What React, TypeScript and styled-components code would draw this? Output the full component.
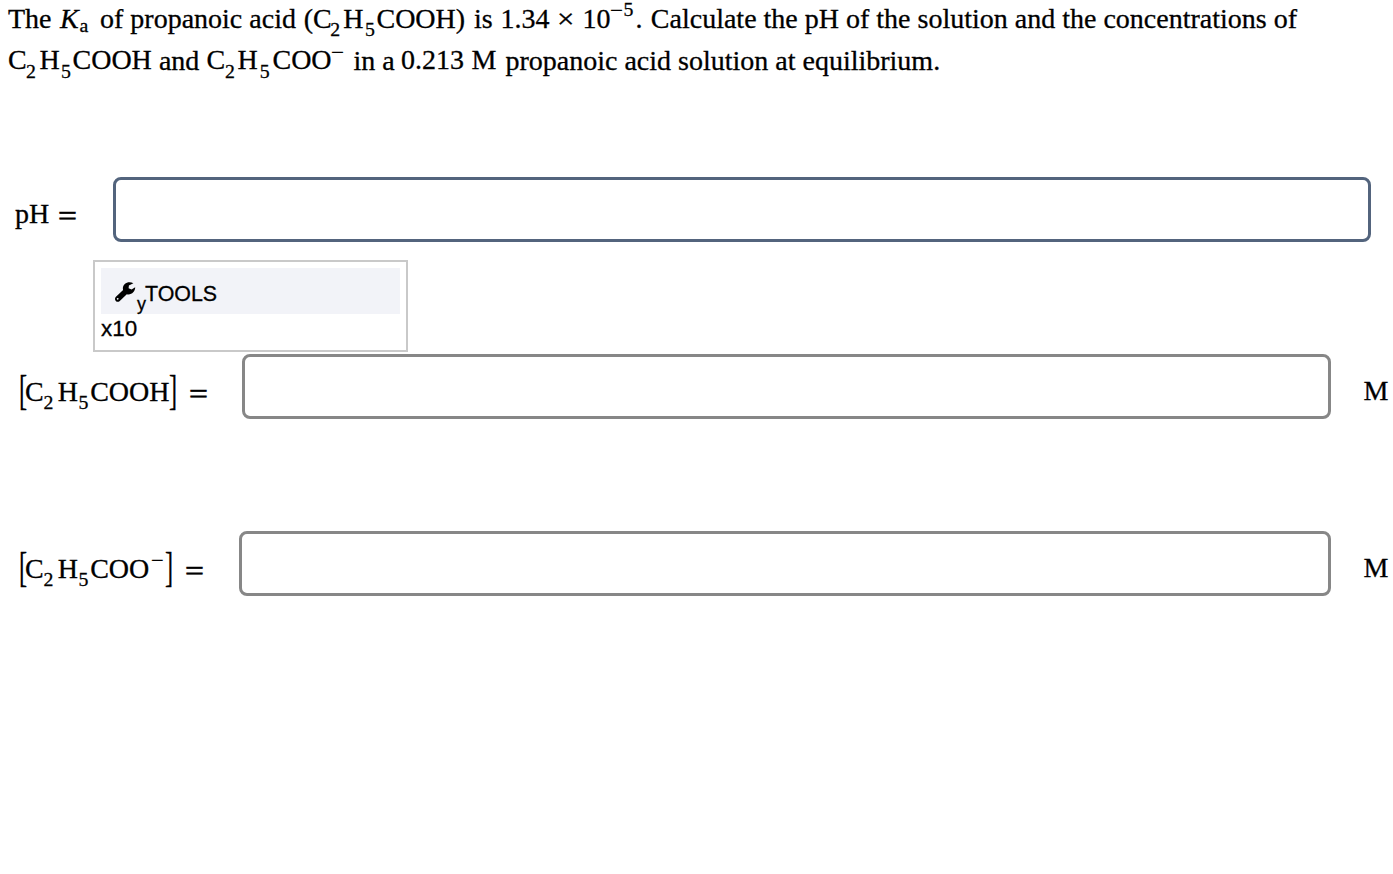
import React from "react";
import styled, { createGlobalStyle, css } from "styled-components";

const GlobalStyle = createGlobalStyle`
  body { margin: 0; background: #fff; }
  * { box-sizing: border-box; }
`;

const Page = styled.main`
  width: 1393px;
  height: 874px;
  overflow: hidden;
  display: flex;
  flex-direction: column;
  color: #000;
  background: #fff;
  font-family: "Liberation Serif", "Times New Roman", serif;
  font-size: 28px;
  -webkit-text-stroke: 0.3px #000;
`;

const Question = styled.header`
  height: 179px;
  margin-top: -2px;
  padding-left: 8px;
  flex: none;
`;

const Line = styled.div`
  height: 42px;
  line-height: 42px;
  white-space: pre;
`;

/* Prose and formula pieces; $w is the advance to the next piece. */
const Words = styled.span<{ $w: number }>`
  display: inline-block;
  width: ${(p) => p.$w}px;
  line-height: 32px;
`;

const Term = styled(Words)<{ $italic?: boolean; $lift?: number }>`
  vertical-align: ${(p) => p.$lift ?? 0}px;
  font-style: ${(p) => (p.$italic ? "italic" : "normal")};
`;

const Script = styled(Words)<{ $shift: number; $stretch?: number }>`
  font-size: 19.8px;
  line-height: 0;
  vertical-align: ${(p) => p.$shift}px;
  ${(p) =>
    p.$stretch &&
    css`
      transform: scaleX(${p.$stretch});
      transform-origin: left;
    `}
`;

const Operator = styled(Words)<{ $stretch: number }>`
  line-height: 0;
  transform: scaleX(${(p) => p.$stretch});
  transform-origin: left;
`;

const Equals = styled(Operator)`
  vertical-align: -2px;
  -webkit-text-stroke-width: 0.6px;
`;

const Bracket = styled(Words)`
  font-size: 42px;
  line-height: 0;
  vertical-align: -3px;
  transform: scaleX(0.58);
  transform-origin: left;
`;

const Sym = styled(Words)`
  line-height: 0;
`;

const Form = styled.form`
  display: flex;
  flex-direction: column;
  gap: 112px;
`;

const Row = styled.div<{ $left: number; $right: number }>`
  position: relative;
  display: flex;
  height: 65px;
  align-items: center;
  padding-left: ${(p) => p.$left}px;
  padding-right: ${(p) => p.$right}px;
`;

const Label = styled.label<{ $w: number; $drop: number }>`
  flex: none;
  width: ${(p) => p.$w}px;
  padding-top: ${(p) => p.$drop}px;
  line-height: 32px;
  white-space: pre;
`;

const Field = styled.input<{ $active?: boolean }>`
  flex: 1;
  min-width: 0;
  height: 65px;
  padding: 0 16px;
  border: 3px solid ${(p) => (p.$active ? "#53647d" : "#878787")};
  border-radius: 8px;
  background: #fff;
  font: inherit;
  outline: none;
`;

const Unit = styled.span`
  width: 25px;
  margin-left: 32.5px;
  margin-right: 0.5px;
  padding-top: 8px;
  line-height: 32px;
`;

const Toolbox = styled.div`
  position: absolute;
  left: 93px;
  top: 83px;
  width: 315px;
  height: 92px;
  padding: 6px;
  border: 2px solid #c9c9c9;
  background: #fff;
  font-family: "Liberation Sans", Arial, sans-serif;
  font-size: 22px;
`;

const ToolboxHeader = styled.div`
  display: flex;
  align-items: center;
  height: 46px;
  padding: 4px 0 0 13px;
  background: #f2f3f8;
  line-height: 26px;
`;

const Wrench = styled.svg`
  width: 22px;
  height: 22px;
  margin: 0 1px 2px 0;
  flex: none;
`;

const ToolSub = styled.span`
  width: 8px;
  padding-top: 21px;
  font-size: 18px;
`;

const ToolTitle = styled.span`
  padding-top: 1px;
  font-size: 21.4px;
`;

const ToolItem = styled.div`
  padding-top: 1px;
  line-height: 28px;
  font-size: 22.4px;
`;

export default function App() {
  return (
    <>
      <GlobalStyle />
      <Page>
        <Question>
          <Line>
            <Words $w={52}>The </Words>
            <Term $w={19.5} $italic>K</Term>
            <Script $w={20.5} $shift={-4}>a</Script>
            <Words $w={203.7}>of propanoic acid </Words>
            <Term $w={26.5}>(C</Term>
            <Script $w={13.1} $shift={-8}>2</Script>
            <Term $w={21.6}>H</Term>
            <Script $w={11.6} $shift={-8}>5</Script>
            <Term $w={97.5}>COOH)</Term>
            <Words $w={26.6}>is</Words>
            <Term $w={56.5}>1.34</Term>
            <Operator $w={25.5} $stretch={1.1}>×</Operator>
            <Term $w={27.4}>10</Term>
            <Script $w={13.5} $shift={11} $stretch={1.16}>−</Script>
            <Script $w={12} $shift={12}>5</Script>
            <Words $w={15.4}>.</Words>
            <Words $w={660}>Calculate the pH of the solution and the concentrations of</Words>
          </Line>
          <Line>
            <Term $w={18} $lift={1}>C</Term>
            <Script $w={13.5} $shift={-8}>2</Script>
            <Term $w={21.5} $lift={1}>H</Term>
            <Script $w={11.5} $shift={-8}>5</Script>
            <Term $w={86.4} $lift={1}>COOH</Term>
            <Words $w={47.6}>and</Words>
            <Term $w={18.5} $lift={1}>C</Term>
            <Script $w={12.5} $shift={-8}>2</Script>
            <Term $w={22.2} $lift={1}>H</Term>
            <Script $w={12.8} $shift={-8}>5</Script>
            <Term $w={58.5} $lift={1}>COO</Term>
            <Script $w={22.5} $shift={11} $stretch={1.16}>−</Script>
            <Words $w={47.6}>in a</Words>
            <Term $w={70.4} $lift={1}>0.213</Term>
            <Term $w={34} $lift={1}>M</Term>
            <Words $w={450}>propanoic acid solution at equilibrium.</Words>
          </Line>
        </Question>

        <Form>
          <Row $left={15} $right={22}>
            <Label $w={98} $drop={8}>
              <Words $w={43.2}>pH</Words>
              <Equals $w={18} $stretch={1.2}>=</Equals>
            </Label>
            <Field $active aria-label="pH" />
            <Toolbox>
              <ToolboxHeader>
                <Wrench viewBox="0 0 22 22" aria-hidden="true">
                  <path
                    fillRule="evenodd"
                    d="M19.4 2.3C17 .6 13 .7 10.8 3C9 4.8 8.5 7 9.1 9L1.7 16C-.5 18.6 2.8 22.3 5.5 20.2L12.8 13.2C17.2 14.3 21.3 11 21.2 6.2L17.6 8.6L14.6 7.2L14.9 4.4ZM3.7 17a.8 .8 0 1 0 .01 0Z"
                  />
                </Wrench>
                <ToolSub>y</ToolSub>
                <ToolTitle>TOOLS</ToolTitle>
              </ToolboxHeader>
              <ToolItem>x10</ToolItem>
            </Toolbox>
          </Row>
          <Row $left={18.5} $right={4}>
            <Label $w={223.5} $drop={10}>
              <Bracket $w={6.5}>[</Bracket>
              <Sym $w={18.6}>C</Sym>
              <Script $w={14.2} $shift={-8}>2</Script>
              <Sym $w={20.7}>H</Sym>
              <Script $w={11.7} $shift={-8}>5</Script>
              <Sym $w={79.2}>COOH</Sym>
              <Bracket $w={19.3}>]</Bracket>
              <Equals $w={18} $stretch={1.2}>=</Equals>
            </Label>
            <Field aria-label="Propanoic acid concentration" />
            <Unit>M</Unit>
          </Row>
          <Row $left={18.5} $right={4}>
            <Label $w={220.5} $drop={10}>
              <Bracket $w={6.5}>[</Bracket>
              <Sym $w={18.6}>C</Sym>
              <Script $w={14.2} $shift={-8}>2</Script>
              <Sym $w={20.7}>H</Sym>
              <Script $w={11.7} $shift={-8}>5</Script>
              <Sym $w={60.8}>COO</Sym>
              <Script $w={14.2} $shift={11} $stretch={1.13}>−</Script>
              <Bracket $w={19.5}>]</Bracket>
              <Equals $w={18} $stretch={1.2}>=</Equals>
            </Label>
            <Field aria-label="Propanoate concentration" />
            <Unit>M</Unit>
          </Row>
        </Form>
      </Page>
    </>
  );
}
